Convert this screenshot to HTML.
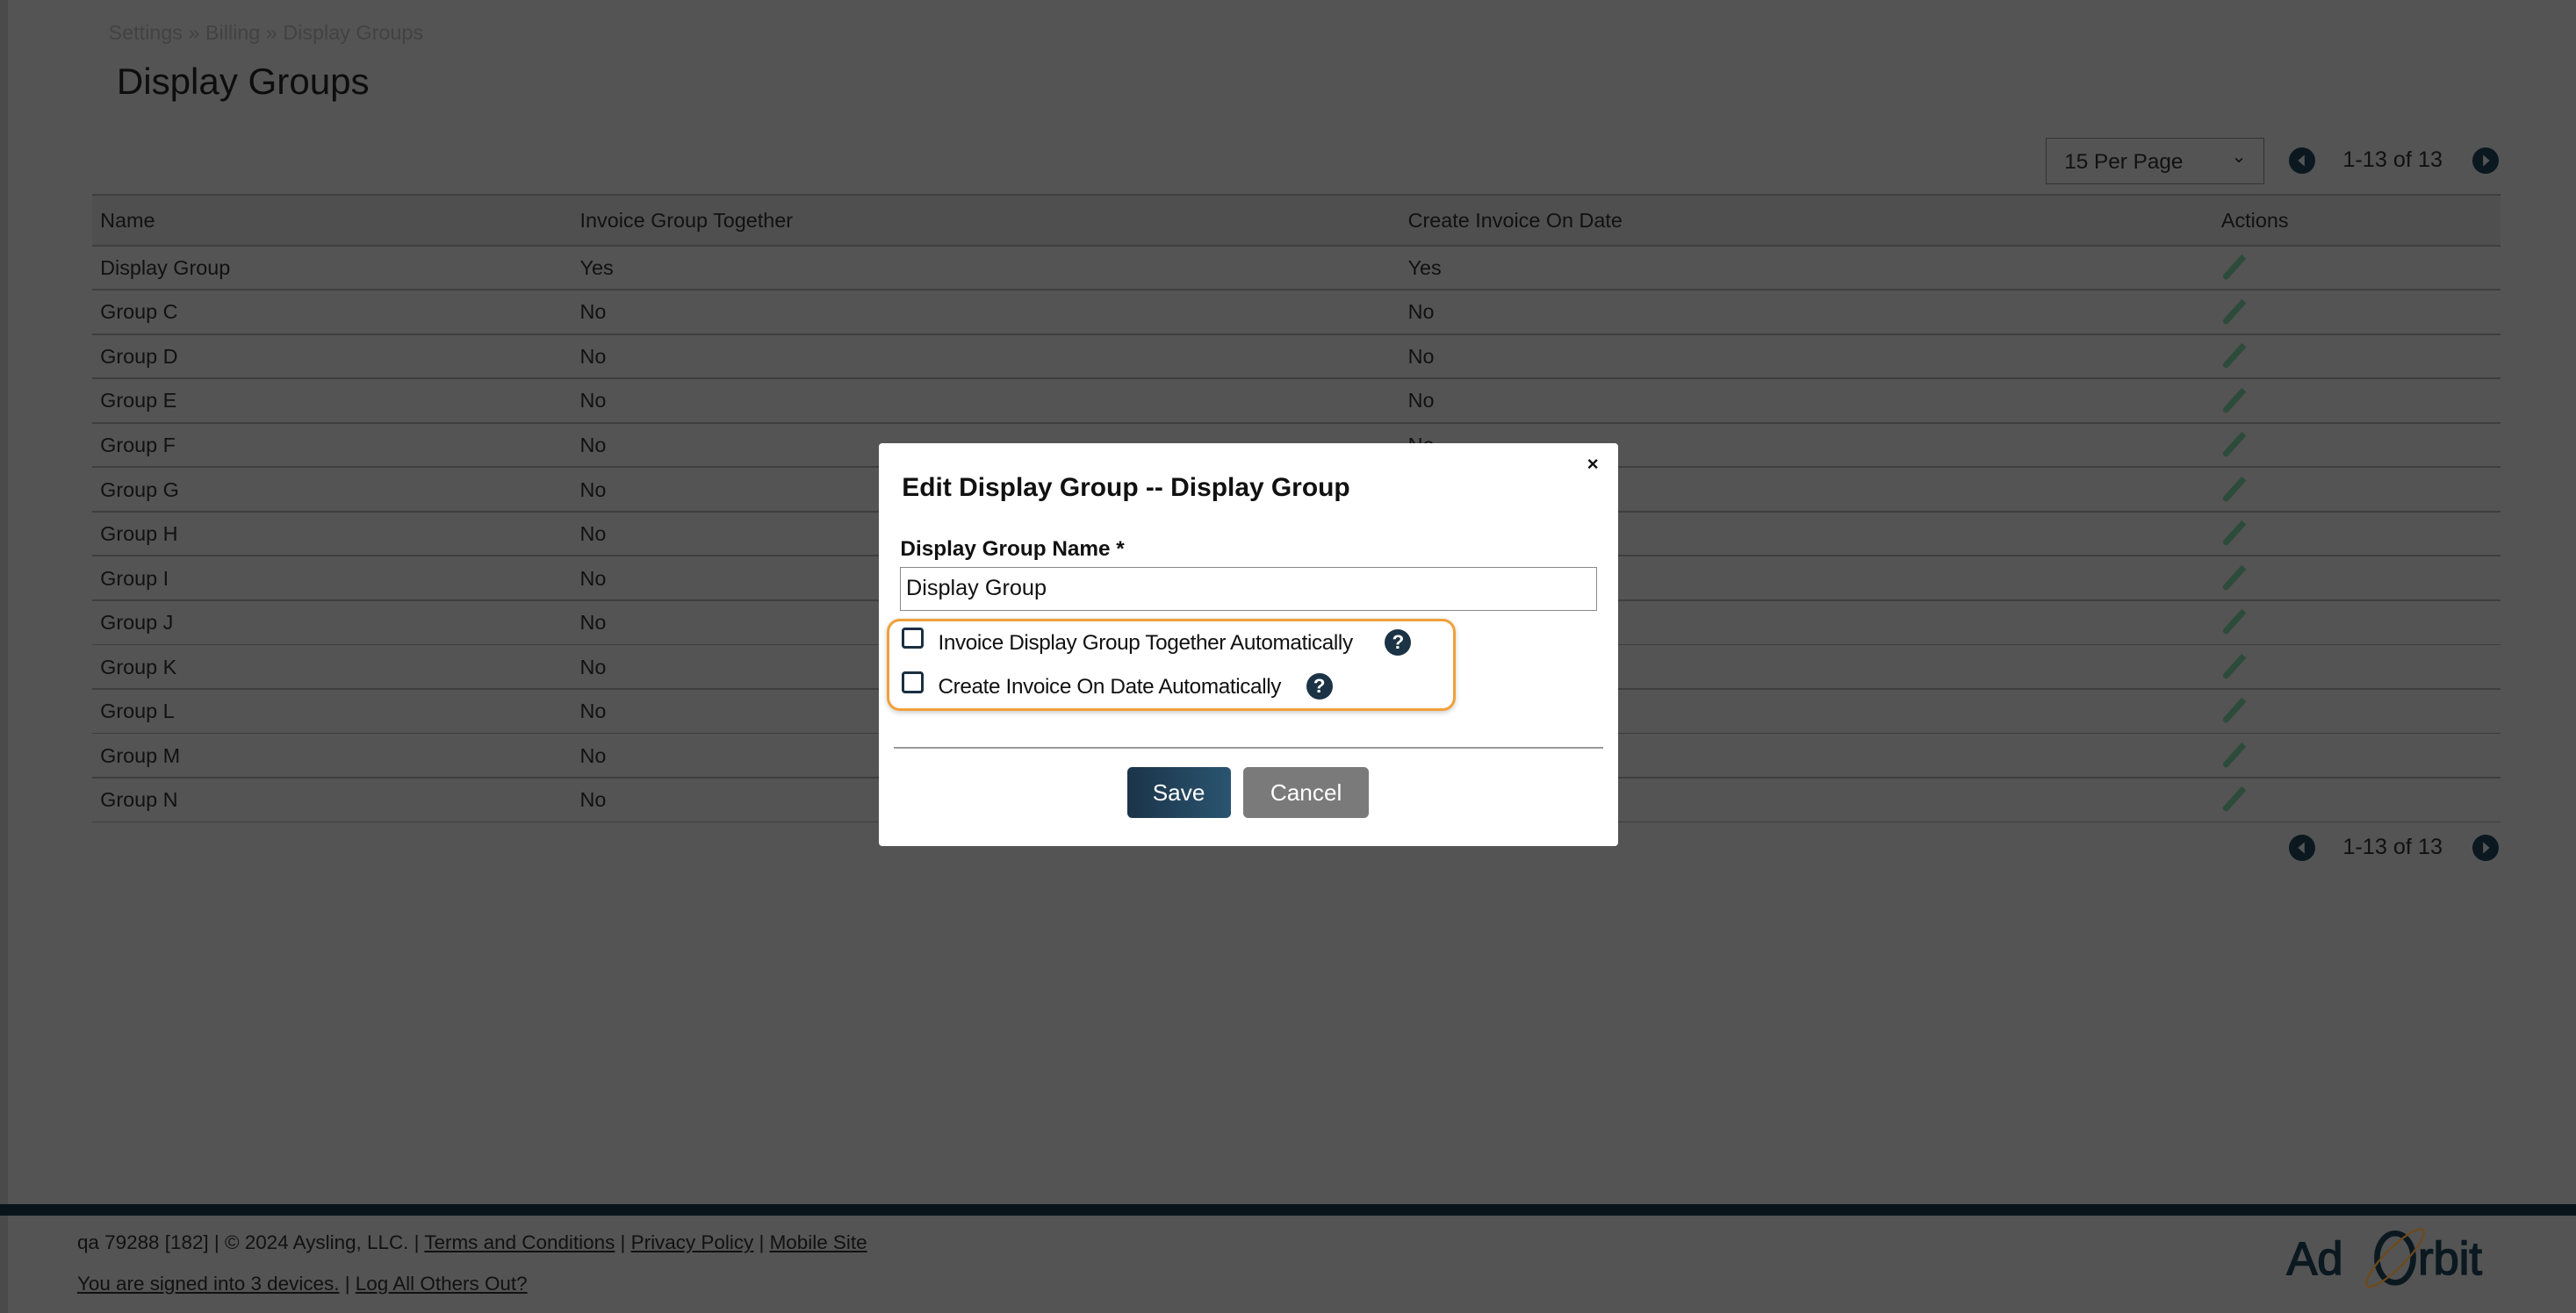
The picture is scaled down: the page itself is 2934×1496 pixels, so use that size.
<!DOCTYPE html>
<html><head><meta charset="utf-8"><style>
html,body{margin:0;padding:0;width:2934px;height:1496px;overflow:hidden;background:#545454;}
#w{zoom:1.8712;width:1568px;height:800px;position:relative;font-family:"Liberation Sans",sans-serif;color:#111;}
.a{position:absolute;white-space:nowrap;}
.hl{position:absolute;left:56px;width:1466px;height:1px;background:#3e3e3e;}
.pen{position:absolute;width:4px;height:18px;background:#2d4b3b;transform:rotate(42deg);border-radius:0 0 2px 2px;}
.circ{position:absolute;width:16px;height:16px;border-radius:50%;background:#0b1820;}
.u{text-decoration:underline;}
.q{position:absolute;width:16px;height:16px;border-radius:50%;background:#1b3345;color:#fff;font-size:12px;font-weight:bold;text-align:center;line-height:16px}
</style></head><body><div id="w">
<div class="a" style="left:0;top:0;width:5px;height:800px;background:#4a4a4a"></div>
<div class="a" style="left:66px;top:13px;font-size:12.5px;color:#424242">Settings » Billing » Display Groups</div>
<div class="a" style="left:71px;top:37px;font-size:22.5px;color:#0d0d0d">Display Groups</div>
<div class="a" style="left:1245px;top:84px;width:133px;height:28px;border:1px solid #333;box-sizing:border-box;font-size:13px;padding:7px 11px">15 Per Page<span style="position:absolute;right:10px;top:4px;font-size:11px">&#8964;</span></div>
<div class="circ" style="left:1393px;top:90px"><svg width="16" height="16"><path d="M9.5 4.5 L5.5 8 L9.5 11.5Z" fill="#555"/></svg></div>
<div class="a" style="left:1426px;top:90px;font-size:13.5px">1-13 of 13</div>
<div class="circ" style="left:1505px;top:90px"><svg width="16" height="16"><path d="M6.5 4.5 L10.5 8 L6.5 11.5Z" fill="#555"/></svg></div>
<div class="a" style="left:56px;top:118px;width:1466px;height:31px;background:#4f4f4f"></div>
<div class="hl" style="top:118px"></div>
<div class="a" style="left:61px;top:127px;font-size:12.5px">Name</div>
<div class="a" style="left:353px;top:127px;font-size:12.5px">Invoice Group Together</div>
<div class="a" style="left:857px;top:127px;font-size:12.5px">Create Invoice On Date</div>
<div class="a" style="left:1352px;top:127px;font-size:12.5px">Actions</div>
<div id="rows"></div>
<div class="circ" style="left:1393px;top:508px"><svg width="16" height="16"><path d="M9.5 4.5 L5.5 8 L9.5 11.5Z" fill="#555"/></svg></div>
<div class="a" style="left:1426px;top:508px;font-size:13.5px">1-13 of 13</div>
<div class="circ" style="left:1505px;top:508px"><svg width="16" height="16"><path d="M6.5 4.5 L10.5 8 L6.5 11.5Z" fill="#555"/></svg></div>

<div class="a" style="left:0;top:733px;width:1568px;height:7px;background:#08131a"></div>
<div class="a" style="left:47px;top:750px;font-size:12px;color:#111">qa 79288 [182] | © 2024 Aysling, LLC. | <span class="u">Terms and Conditions</span> | <span class="u">Privacy Policy</span> | <span class="u">Mobile Site</span></div>
<div class="a" style="left:47px;top:775px;font-size:12px;color:#111"><span class="u">You are signed into 3 devices.</span> | <span class="u">Log All Others Out?</span></div>
<svg class="a" style="left:1388px;top:745px" width="140" height="42">
<text x="4" y="31" font-family="Liberation Sans" font-size="28" fill="#0b1820" stroke="#0b1820" stroke-width="0.8">Ad</text>
<ellipse cx="70" cy="21" rx="11" ry="15" fill="none" stroke="#0b1820" stroke-width="3.5"/>
<ellipse cx="70" cy="21" rx="24" ry="6" fill="none" stroke="#6e4a1a" stroke-width="1.2" transform="rotate(-45 70 21)"/>
<text x="84" y="31" font-family="Liberation Sans" font-size="28" fill="#0b1820" stroke="#0b1820" stroke-width="0.8">rbit</text>
</svg>

<div class="a" style="left:535px;top:270px;width:450px;height:245px;background:#fff;border-radius:2px"></div>
<div class="a" style="left:966px;top:276px;font-size:12px;font-weight:bold">×</div>
<div class="a" style="left:549px;top:288px;font-size:16px;font-weight:bold;color:#111">Edit Display Group -- Display Group</div>
<div class="a" style="left:548px;top:327px;font-size:13px;font-weight:bold">Display Group Name *</div>
<div class="a" style="left:548px;top:345px;width:424px;height:27px;border:1px solid #888;box-sizing:border-box;font-size:13.5px;padding:5px 3px">Display Group</div>
<div class="a" style="left:540px;top:377px;width:346px;height:56px;border:2px solid #f0a03a;border-radius:8px;box-sizing:border-box;box-shadow:0 1px 3px rgba(0,0,0,.2)"></div>
<div class="a" style="left:549px;top:382px;width:13px;height:13px;border:2px solid #1a2f40;border-radius:2px;box-sizing:border-box"></div>
<div class="a" style="left:571px;top:384px;font-size:13px;letter-spacing:-0.2px">Invoice Display Group Together Automatically</div>
<div class="q" style="left:843px;top:383px">?</div>
<div class="a" style="left:549px;top:409px;width:13px;height:13px;border:2px solid #1a2f40;border-radius:2px;box-sizing:border-box"></div>
<div class="a" style="left:571px;top:411px;font-size:13px;letter-spacing:-0.2px">Create Invoice On Date Automatically</div>
<div class="q" style="left:795px;top:410px">?</div>
<div class="a" style="left:544px;top:455px;width:432px;height:1px;background:#999"></div>
<div class="a" style="left:686px;top:467px;width:63px;height:31px;border-radius:3px;background:linear-gradient(90deg,#1b3449,#2a5470);color:#fff;font-size:14px;text-align:center;line-height:32px">Save</div>
<div class="a" style="left:757px;top:467px;width:76px;height:31px;border-radius:3px;background:#7a7a7a;color:#fff;font-size:14px;text-align:center;line-height:32px">Cancel</div>
</div>
<script>
var names=["Display Group","Group C","Group D","Group E","Group F","Group G","Group H","Group I","Group J","Group K","Group L","Group M","Group N"];
var h="";
for(var i=0;i<13;i++){var t=149+27*i;var v=i==0?"Yes":"No";
h+='<div class="hl" style="top:'+t+'px"></div>';
h+='<div class="a" style="left:61px;top:'+(t+7)+'px;font-size:12.5px">'+names[i]+'</div>';
h+='<div class="a" style="left:353px;top:'+(t+7)+'px;font-size:12.5px">'+v+'</div>';
h+='<div class="a" style="left:857px;top:'+(t+7)+'px;font-size:12.5px">'+v+'</div>';
h+='<div class="pen" style="left:1358px;top:'+(t+5)+'px"></div>';}
h+='<div class="hl" style="top:500px"></div>';
document.getElementById("rows").outerHTML=h;
</script>
</body></html>
